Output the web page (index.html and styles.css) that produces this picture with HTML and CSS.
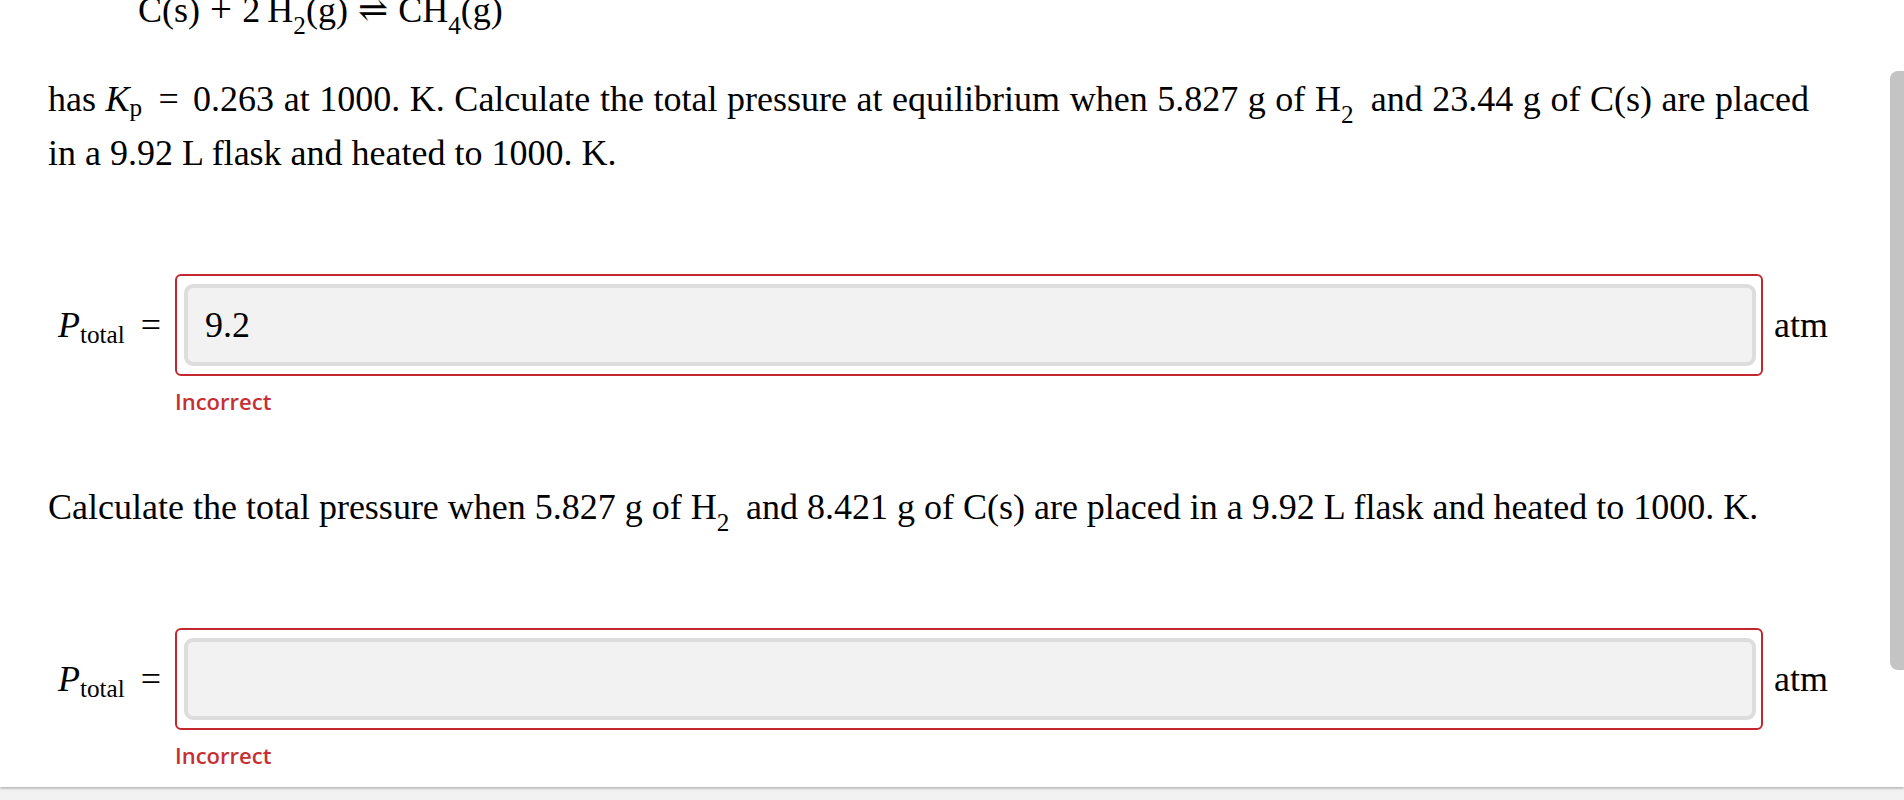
FILE: index.html
```html
<!DOCTYPE html>
<html lang="en">
<head>
<meta charset="utf-8">
<title>Equilibrium question</title>
<link rel="stylesheet" href="styles.css">
</head>
<body>
<main class="card">
  <div class="equation">C(s)<span class="op">+</span>2&#8201;H<span class="csub">2</span>(g)<span class="rel-op">&#8652;</span>CH<span class="csub">4</span>(g)</div>

  <p class="para first">has <span class="var">K</span><span class="ksub">p</span><span class="mrel">=</span>0.263 at 1000. K. Calculate the total pressure at equilibrium when 5.827 g of H<span class="csub">2</span> and 23.44 g of C(s) are placed in a 9.92 L flask and heated to 1000. K.</p>

  <div class="answer-row">
    <div class="lhs"><span class="var">P</span><span class="tsub">total</span><span class="eq">=</span></div>
    <div class="answer">
      <input class="field" type="text" value="9.2" aria-label="P total">
    </div>
    <span class="unit">atm</span>
  </div>
  <div class="feedback">Incorrect</div>

  <p class="para second">Calculate the total pressure when 5.827 g of H<span class="csub">2</span> and 8.421 g of C(s) are placed in a 9.92 L flask and heated to 1000. K.</p>

  <div class="answer-row">
    <div class="lhs"><span class="var">P</span><span class="tsub">total</span><span class="eq">=</span></div>
    <div class="answer">
      <input class="field" type="text" value="" aria-label="P total">
    </div>
    <span class="unit">atm</span>
  </div>
  <div class="feedback">Incorrect</div>
</main>
<div class="scroll-thumb"></div>
</body>
</html>
```

FILE: styles.css
```css
html, body {
  margin: 0;
  padding: 0;
}

body {
  background: #f2f2f2;
  overflow: hidden;
  height: 800px;
}

.card {
  background: #ffffff;
  box-shadow: 0 1px 3px rgba(0, 0, 0, 0.35);
  padding: 0 0 17px 48px;
  font-family: "Liberation Serif", "Times New Roman", "DejaVu Serif", serif;
  font-size: 36px;
  line-height: 54px;
  color: #000;
}

.equation {
  margin-top: -18px;
  padding-left: 90px;
  white-space: nowrap;
}

.op {
  margin: 0 0.26em;
  font-size: 1.08em;
}

.rel-op {
  margin: 0 0.28em;
}

.mrel {
  margin: 0 0.4em 0 0.45em;
}

.var {
  font-style: italic;
}

.csub,
.ksub,
.tsub {
  font-size: 0.7em;
  line-height: 0;
}

.csub {
  vertical-align: -0.47em;
}

.para .csub {
  margin-right: 0.3em;
}

.ksub {
  vertical-align: -0.2em;
}

.tsub {
  vertical-align: -0.24em;
}

.para {
  margin: 0;
  max-width: 1761px;
}

.para.first {
  margin-top: 35px;
  text-align: justify;
}

.para.second {
  margin-top: 64px;
  white-space: nowrap;
}

.answer-row {
  display: flex;
  align-items: center;
  margin-top: 94px;
}

.lhs {
  flex: none;
  width: 127px;
  padding-left: 10px;
  box-sizing: border-box;
  white-space: nowrap;
}

.eq {
  margin-left: 16px;
}

.answer {
  flex: none;
  width: 1588px;
  box-sizing: border-box;
  border: 2px solid #c4262e;
  border-radius: 6px;
  padding: 8px 5px 8px 7px;
}

.field {
  display: block;
  width: 100%;
  height: 82px;
  box-sizing: border-box;
  margin: 0;
  border: 4px solid #dddddd;
  border-radius: 9px;
  background: #f2f2f2;
  padding: 0 0 0 17px;
  font-family: "Liberation Serif", "Times New Roman", serif;
  font-size: 36px;
  color: #000;
  outline: none;
}

.unit {
  margin-left: 11px;
}

.feedback {
  margin: 10px 0 0 127px;
  font-family: "Open Sans", "Liberation Sans", sans-serif;
  font-weight: 600;
  font-size: 22px;
  line-height: 30px;
  color: #c62f33;
}

.scroll-thumb {
  position: absolute;
  top: 71px;
  right: 0;
  width: 14px;
  height: 599px;
  background: #c4c4c4;
  border-radius: 8px 0 0 8px;
}
```
